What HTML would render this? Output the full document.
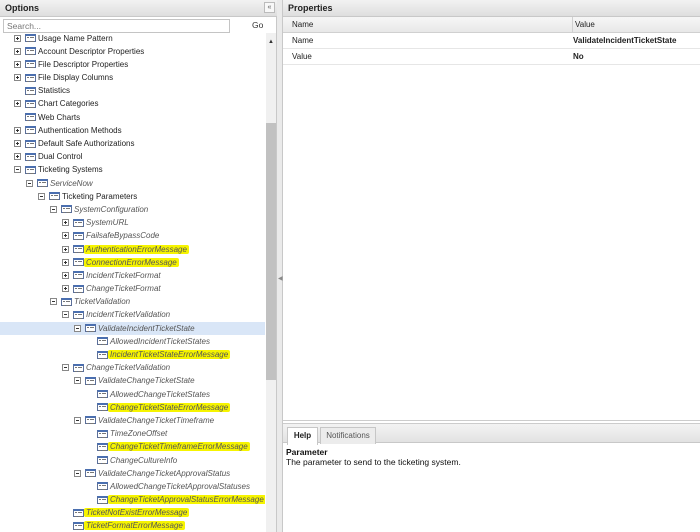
<!DOCTYPE html>
<html><head><meta charset="utf-8"><style>
*{margin:0;padding:0;box-sizing:border-box}
body{width:700px;height:532px;overflow:hidden;background:#fff;font-family:"Liberation Sans",Arial,sans-serif;position:relative}
.hdr{position:absolute;top:0;height:17px;background:linear-gradient(#f2f2f2,#dedede);border-bottom:1px solid #c8c8c8;font-weight:bold;font-size:9px;color:#222;padding:3px 5px}
#lp{position:absolute;left:0;top:0;width:277px;height:532px;border-right:1px solid #c8c8c8;background:#fff}
#split{position:absolute;left:277px;top:0;width:6px;height:532px;background:#eaeaea;border-right:1px solid #c8c8c8}
#rp{position:absolute;left:283px;top:0;width:417px;height:532px;background:#fff}
.search{position:absolute;left:3px;top:19px;width:227px;height:14px;border:1px solid #c4c4c4;font-size:8.5px;color:#777;padding:1px 3px}
.go{position:absolute;left:252px;top:20px;font-size:8.5px;color:#333}
.coll{position:absolute;left:264px;top:2px;width:11px;height:11px;border:1px solid #bbb;background:#f8f8f8;font-size:7px;color:#555;text-align:center;line-height:9px}
#tree{position:absolute;left:0;top:31.5px;width:265px;height:500px;overflow:hidden}
.r{position:relative;height:13.2px;font-size:8px;line-height:13px;white-space:nowrap;color:#222}
.r.i{font-style:italic;color:#555}
.sel{background:#d9e6f7}
.ex{position:absolute;top:3px;width:7px;height:7px;border:1px solid #888;background:#fff}
.ex:after{content:"";position:absolute;left:1px;top:2px;width:3px;height:1px;background:#333}
.ex.p:before{content:"";position:absolute;left:2px;top:1px;width:1px;height:3px;background:#333}
.ic{position:absolute;top:2.5px;width:11px;height:8px;border:1px solid #5b6f99;background:#fff;border-top:2px solid #4a6fb0}
.ic:before{content:"";position:absolute;left:1px;top:1px;width:2px;height:3px;border-top:1px solid #777;border-bottom:1px solid #777}
.ic:after{content:"";position:absolute;left:4px;top:1px;width:4px;height:3px;border-top:1px solid #777;border-bottom:1px solid #777}
.t{position:absolute;top:0}
.hl{background:#f6f400;padding:0 2px;margin-left:-2px;border-radius:2px}
.sb{position:absolute;left:266px;top:33px;width:10px;height:499px;background:#f0f0f0}
.th{position:absolute;left:266px;top:123px;width:10px;height:257px;background:#c1c1c1}
.tbl{position:absolute;left:0;top:17px;width:417px;font-size:8px;color:#222}
.tr{height:16px;border-bottom:1px solid #e6e6e6;position:relative;line-height:16px}
.th2{background:linear-gradient(#f6f6f6,#e8e8e8);border-bottom:1px solid #d0d0d0}
.c1{position:absolute;left:9px}
.c2{position:absolute;left:290px;font-weight:bold}
.tabs{position:absolute;left:0;top:423px;width:417px;height:20px;background:linear-gradient(#f3f3f3,#e2e2e2);border-top:1px solid #ccc;border-bottom:1px solid #c8c8c8}
.tab{position:absolute;top:3px;height:17px;border:1px solid #c6c6c6;border-bottom:none;font-size:8px;line-height:15px;text-align:center;background:#ececec;color:#555}
</style></head><body>
<div id="lp">
<div class="hdr" style="left:0;width:277px">Options</div>
<div class="coll">&laquo;</div>
<div class="search">Search...</div>
<div class="go">Go</div>
<div id="tree">
<div class="r"><span class="ex p" style="left:14px"></span><span class="ic" style="left:25px"></span><span class="t" style="left:38px">Usage Name Pattern</span></div>
<div class="r"><span class="ex p" style="left:14px"></span><span class="ic" style="left:25px"></span><span class="t" style="left:38px">Account Descriptor Properties</span></div>
<div class="r"><span class="ex p" style="left:14px"></span><span class="ic" style="left:25px"></span><span class="t" style="left:38px">File Descriptor Properties</span></div>
<div class="r"><span class="ex p" style="left:14px"></span><span class="ic" style="left:25px"></span><span class="t" style="left:38px">File Display Columns</span></div>
<div class="r"><span class="ic" style="left:25px"></span><span class="t" style="left:38px">Statistics</span></div>
<div class="r"><span class="ex p" style="left:14px"></span><span class="ic" style="left:25px"></span><span class="t" style="left:38px">Chart Categories</span></div>
<div class="r"><span class="ic" style="left:25px"></span><span class="t" style="left:38px">Web Charts</span></div>
<div class="r"><span class="ex p" style="left:14px"></span><span class="ic" style="left:25px"></span><span class="t" style="left:38px">Authentication Methods</span></div>
<div class="r"><span class="ex p" style="left:14px"></span><span class="ic" style="left:25px"></span><span class="t" style="left:38px">Default Safe Authorizations</span></div>
<div class="r"><span class="ex p" style="left:14px"></span><span class="ic" style="left:25px"></span><span class="t" style="left:38px">Dual Control</span></div>
<div class="r"><span class="ex" style="left:14px"></span><span class="ic" style="left:25px"></span><span class="t" style="left:38px">Ticketing Systems</span></div>
<div class="r i"><span class="ex" style="left:26px"></span><span class="ic" style="left:37px"></span><span class="t" style="left:50px">ServiceNow</span></div>
<div class="r"><span class="ex" style="left:38px"></span><span class="ic" style="left:49px"></span><span class="t" style="left:62px">Ticketing Parameters</span></div>
<div class="r i"><span class="ex" style="left:50px"></span><span class="ic" style="left:61px"></span><span class="t" style="left:74px">SystemConfiguration</span></div>
<div class="r i"><span class="ex p" style="left:62px"></span><span class="ic" style="left:73px"></span><span class="t" style="left:86px">SystemURL</span></div>
<div class="r i"><span class="ex p" style="left:62px"></span><span class="ic" style="left:73px"></span><span class="t" style="left:86px">FailsafeBypassCode</span></div>
<div class="r i"><span class="ex p" style="left:62px"></span><span class="ic" style="left:73px"></span><span class="t" style="left:86px"><span class="hl">AuthenticationErrorMessage</span></span></div>
<div class="r i"><span class="ex p" style="left:62px"></span><span class="ic" style="left:73px"></span><span class="t" style="left:86px"><span class="hl">ConnectionErrorMessage</span></span></div>
<div class="r i"><span class="ex p" style="left:62px"></span><span class="ic" style="left:73px"></span><span class="t" style="left:86px">IncidentTicketFormat</span></div>
<div class="r i"><span class="ex p" style="left:62px"></span><span class="ic" style="left:73px"></span><span class="t" style="left:86px">ChangeTicketFormat</span></div>
<div class="r i"><span class="ex" style="left:50px"></span><span class="ic" style="left:61px"></span><span class="t" style="left:74px">TicketValidation</span></div>
<div class="r i"><span class="ex" style="left:62px"></span><span class="ic" style="left:73px"></span><span class="t" style="left:86px">IncidentTicketValidation</span></div>
<div class="r i sel"><span class="ex" style="left:74px"></span><span class="ic" style="left:85px"></span><span class="t" style="left:98px">ValidateIncidentTicketState</span></div>
<div class="r i"><span class="ic" style="left:97px"></span><span class="t" style="left:110px">AllowedIncidentTicketStates</span></div>
<div class="r i"><span class="ic" style="left:97px"></span><span class="t" style="left:110px"><span class="hl">IncidentTicketStateErrorMessage</span></span></div>
<div class="r i"><span class="ex" style="left:62px"></span><span class="ic" style="left:73px"></span><span class="t" style="left:86px">ChangeTicketValidation</span></div>
<div class="r i"><span class="ex" style="left:74px"></span><span class="ic" style="left:85px"></span><span class="t" style="left:98px">ValidateChangeTicketState</span></div>
<div class="r i"><span class="ic" style="left:97px"></span><span class="t" style="left:110px">AllowedChangeTicketStates</span></div>
<div class="r i"><span class="ic" style="left:97px"></span><span class="t" style="left:110px"><span class="hl">ChangeTicketStateErrorMessage</span></span></div>
<div class="r i"><span class="ex" style="left:74px"></span><span class="ic" style="left:85px"></span><span class="t" style="left:98px">ValidateChangeTicketTimeframe</span></div>
<div class="r i"><span class="ic" style="left:97px"></span><span class="t" style="left:110px">TimeZoneOffset</span></div>
<div class="r i"><span class="ic" style="left:97px"></span><span class="t" style="left:110px"><span class="hl">ChangeTicketTimeframeErrorMessage</span></span></div>
<div class="r i"><span class="ic" style="left:97px"></span><span class="t" style="left:110px">ChangeCultureInfo</span></div>
<div class="r i"><span class="ex" style="left:74px"></span><span class="ic" style="left:85px"></span><span class="t" style="left:98px">ValidateChangeTicketApprovalStatus</span></div>
<div class="r i"><span class="ic" style="left:97px"></span><span class="t" style="left:110px">AllowedChangeTicketApprovalStatuses</span></div>
<div class="r i"><span class="ic" style="left:97px"></span><span class="t" style="left:110px"><span class="hl">ChangeTicketApprovalStatusErrorMessage</span></span></div>
<div class="r i"><span class="ic" style="left:73px"></span><span class="t" style="left:86px"><span class="hl">TicketNotExistErrorMessage</span></span></div>
<div class="r i"><span class="ic" style="left:73px"></span><span class="t" style="left:86px"><span class="hl">TicketFormatErrorMessage</span></span></div>
</div>
<div class="sb"></div><div class="th"></div>
<div style="position:absolute;left:268px;top:39px;font-size:6px;color:#333">&#9650;</div>
</div>
<div id="split"><div style="position:absolute;left:1px;top:275px;font-size:6px;color:#888">&#9664;</div></div>
<div id="rp">
<div class="hdr" style="left:0;width:417px">Properties</div>
<div class="tbl">
<div class="tr th2"><span class="c1">Name</span><span style="position:absolute;left:289px;top:0;height:16px;border-left:1px solid #d0d0d0"></span><span class="c1" style="left:292px">Value</span></div>
<div class="tr"><span class="c1">Name</span><span class="c2">ValidateIncidentTicketState</span></div>
<div class="tr"><span class="c1">Value</span><span class="c2">No</span></div>
</div>
<div style="position:absolute;left:0;top:420px;width:417px;border-top:1px solid #ccc"></div>
<div class="tabs">
<div class="tab" style="left:4px;width:31px;background:#fff;color:#222;font-weight:bold;height:18px">Help</div>
<div class="tab" style="left:37px;width:56px">Notifications</div>
</div>
<div style="position:absolute;left:3px;top:447px;font-size:8.5px;color:#111;line-height:10px"><b>Parameter</b><br>The parameter to send to the ticketing system.</div>
</div>
</body></html>
